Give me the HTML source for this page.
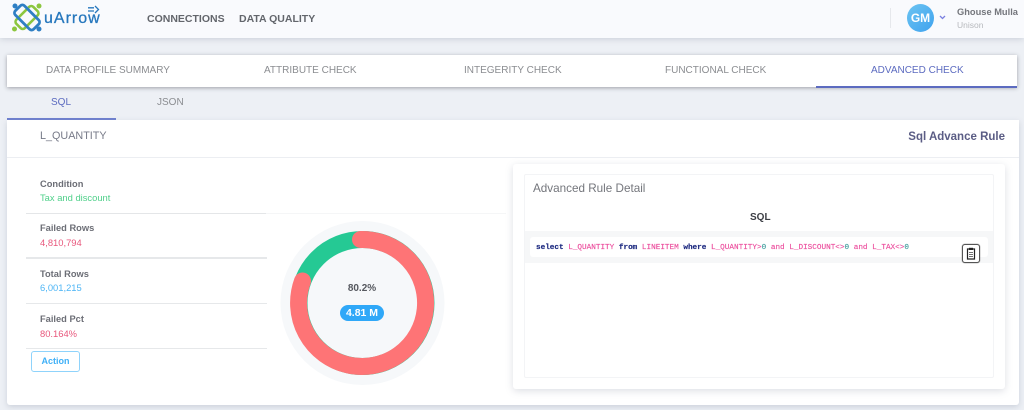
<!DOCTYPE html>
<html><head><meta charset="utf-8"><style>
*{box-sizing:border-box}
html,body{margin:0;padding:0}
body{width:1024px;height:410px;overflow:hidden;background:#edf0f5;font-family:"Liberation Sans",sans-serif;position:relative}
div,span{position:absolute;white-space:nowrap}
svg{position:absolute}
.lab{left:40px;font-size:9.3px;font-weight:bold;color:#6c6e76;line-height:12px}
.val{left:40px;font-size:9.4px;line-height:12px}
.hr{left:26px;width:241px;height:1px;background:#e6e8ea}
.tab{top:65px;font-size:10px;line-height:12px;color:#8b8d91}
.code{top:243px;font-family:"Liberation Mono",monospace;font-size:7.68px;line-height:10px;white-space:pre;color:#ec4f9e;left:536px;-webkit-text-stroke:.15px currentColor}
.code b{color:#1d2a80}.code i{font-style:normal;color:#3f9c9c}
</style></head><body>
<div style="left:0;top:0;width:1024px;height:38px;background:#f9fafd;box-shadow:0 1px 6px rgba(120,130,150,.3)"></div>
<svg style="left:12px;top:3px" width="34" height="31" viewBox="0 0 34 31" fill="none">
<rect x="3" y="8.500" width="24" height="12" rx="3" transform="rotate(-45 15 14.500)" stroke="#8cc63f" stroke-width="2.600"/>
<rect x="2" y="8" width="26" height="13" rx="3" transform="rotate(45 15 14.500)" stroke="#2f7fc4" stroke-width="2.800"/>
<circle cx="3" cy="3" r="2.500" fill="#2f7fc4"/><circle cx="27" cy="3" r="2.500" fill="#8cc63f"/><circle cx="2.500" cy="26" r="2.500" fill="#8cc63f"/><circle cx="27" cy="26" r="2.500" fill="#2f7fc4"/>
</svg>
<div style="left:44px;top:8px;font-size:16px;line-height:22px;color:#2677bd;letter-spacing:1px;-webkit-text-stroke:.3px #2677bd">uArrow</div>
<svg style="left:88px;top:5px" width="13" height="9" viewBox="0 0 13 9" fill="none" stroke="#2677bd" stroke-width="1.300"><path d="M0 2.800H6M0 6H6M7 1L10.500 4.500L7 8"/></svg>
<div style="left:147px;top:13px;font-size:10.500px;line-height:13px;font-weight:bold;color:#63666c">CONNECTIONS</div>
<div style="left:239px;top:13px;font-size:10.500px;line-height:13px;font-weight:bold;color:#63666c">DATA QUALITY</div>
<div style="left:890px;top:8px;width:1px;height:20px;background:#e6e8ec"></div>
<div style="left:907px;top:4px;width:27px;height:28px;border-radius:50%;background:linear-gradient(135deg,#6cc4f2,#3fa2ee);color:#fff;font-size:12px;font-weight:bold;text-align:center;line-height:28px">GM</div>
<svg style="left:939px;top:15px" width="7" height="5" viewBox="0 0 7 5" fill="none" stroke="#7b80e0" stroke-width="1.300"><path d="M1 1L3.500 3.500L6 1"/></svg>
<div style="left:957px;top:6px;font-size:9.300px;line-height:12px;font-weight:bold;color:#74767c">Ghouse Mulla</div>
<div style="left:957px;top:20px;font-size:8.500px;line-height:11px;color:#b7b9bd">Unison</div>

<div style="left:7px;top:55px;width:1010px;height:32px;background:#fff;box-shadow:0 1px 4px rgba(60,60,70,.45)"></div>
<div class="tab" style="left:46px">DATA PROFILE SUMMARY</div>
<div class="tab" style="left:264px">ATTRIBUTE CHECK</div>
<div class="tab" style="left:464px">INTEGERITY CHECK</div>
<div class="tab" style="left:665px">FUNCTIONAL CHECK</div>
<div class="tab" style="left:871px;color:#5c6bc0">ADVANCED CHECK</div>
<div style="left:816px;top:86px;width:201px;height:1.500px;background:#5c6bc0"></div>
<div class="tab" style="left:51px;top:97px;color:#5c6bc0">SQL</div>
<div class="tab" style="left:157px;top:97px">JSON</div>
<div style="left:7px;top:118px;width:109px;height:2px;background:#6f80cf"></div>

<div style="left:7px;top:120px;width:1012px;height:285px;background:#fff;border-radius:0 0 3px 3px;box-shadow:0 2px 6px rgba(130,140,160,.3)"></div>
<div style="left:7px;top:157px;width:1012px;height:1px;background:#eceef2"></div>
<div style="left:40px;top:129px;font-size:10.800px;line-height:15px;color:#777a88">L_QUANTITY</div>
<div style="right:19px;top:130px;font-size:11.500px;line-height:15px;font-weight:bold;color:#5b5d85">Sql Advance Rule</div>

<div class="lab" style="top:178px">Condition</div>
<div class="val" style="top:192px;color:#4fd08a">Tax and discount</div>
<div class="hr" style="top:213px;width:480px;background:linear-gradient(90deg,#e4e6e8 50%,#f5f6f7 50%)"></div>
<div class="lab" style="top:222px">Failed Rows</div>
<div class="val" style="top:237px;color:#e8577c">4,810,794</div>
<div class="hr" style="top:257px;height:2px"></div>
<div class="lab" style="top:268px">Total Rows</div>
<div class="val" style="top:282px;color:#4db5f5">6,001,215</div>
<div class="hr" style="top:303px"></div>
<div class="lab" style="top:313px">Failed Pct</div>
<div class="val" style="top:328px;color:#e8577c">80.164%</div>
<div class="hr" style="top:348px"></div>
<div style="left:31px;top:351px;width:49px;height:21px;border:1px solid #8fd3fb;border-radius:3px;color:#3fb0f7;font-size:9px;font-weight:bold;text-align:center;line-height:19px">Action</div>

<svg style="left:270px;top:210px" width="190" height="190" viewBox="0 0 190 190">
<circle cx="92.500" cy="93" r="82" fill="#f6f8fa"/>
<circle cx="92.500" cy="93" r="63.500" fill="none" stroke="#25c994" stroke-width="17"/>
<path d="M90.500 29.500 A63.500 63.500 0 1 1 32.500 71" fill="none" stroke="#fe7476" stroke-width="17" stroke-linecap="round"/>
</svg>
<div style="left:322px;top:282px;width:80px;text-align:center;font-size:10px;line-height:13px;font-weight:bold;color:#55585e">80.2%</div>
<div style="left:340px;top:305px;width:44px;height:16px;border-radius:8px;background:#2fa8f8;color:#fff;font-size:10.500px;font-weight:bold;text-align:center;line-height:16px">4.81 M</div>

<div style="left:513px;top:164px;width:492px;height:225px;background:#fff;border-radius:3px;box-shadow:0 2px 8px rgba(100,110,130,.22)"></div>
<div style="left:524px;top:174px;width:470px;height:204px;border:1px solid #f3f4f6;border-radius:2px"></div>
<div style="left:533px;top:181px;font-size:11.700px;line-height:15px;color:#74767c">Advanced Rule Detail</div>
<div style="left:750px;top:212px;font-size:10px;line-height:12px;font-weight:bold;color:#3c3e44">SQL</div>
<div style="left:525px;top:231px;width:468px;height:32px;background:#f6f7f8"></div>
<div style="left:530px;top:237px;width:458px;height:20px;background:#fff;border-radius:3px"></div>
<div class="code"><b>select</b> L_QUANTITY <b>from</b> LINEITEM <b>where</b> L_QUANTITY&gt;<i>0</i> and L_DISCOUNT&lt;&gt;<i>0</i> and L_TAX&lt;&gt;<i>0</i></div>
<div style="left:962px;top:244px;width:18px;height:19px;border:1px solid #555;border-radius:3px;background:#fff;box-shadow:0 0 1px #444"></div>
<svg style="left:965px;top:246px" width="12" height="15" viewBox="0 0 12 15" fill="none"><path d="M2.500 3H9.500V13H2.500Z" stroke="#222" stroke-width="1.200"/><path d="M4 1.800H8V4H4Z" fill="#222"/><path d="M4 6.500H8M4 8.500H8M4 10.500H8" stroke="#444" stroke-width=".8"/></svg>
</body></html>
